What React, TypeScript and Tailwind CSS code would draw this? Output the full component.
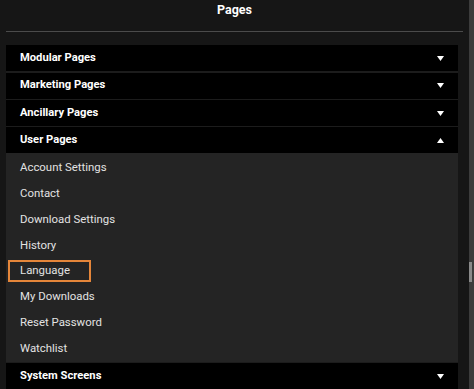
import React from 'react';

const sections = [
  { title: 'Modular Pages', open: false },
  { title: 'Marketing Pages', open: false },
  { title: 'Ancillary Pages', open: false },
  { title: 'User Pages', open: true },
  { title: 'System Screens', open: false },
];

const userPages = [
  'Account Settings',
  'Contact',
  'Download Settings',
  'History',
  'Language',
  'My Downloads',
  'Reset Password',
  'Watchlist',
];

function Caret({ up }: { up: boolean }) {
  return (
    <svg width="7" height="5" viewBox="0 0 7 5" className="shrink-0">
      {up ? <polygon points="0,5 7,5 3.5,0" fill="#fff" /> : <polygon points="0,0 7,0 3.5,5" fill="#fff" />}
    </svg>
  );
}

export default function App() {
  return (
    <div
      className="flex h-[389px] w-[474px] overflow-hidden bg-[#141414] text-white"
      style={{ fontFamily: 'Roboto, "Liberation Sans", sans-serif' }}
    >
      <div className="flex w-[469px] flex-col bg-[#161616]">
        {/* Header */}
        <div className="flex h-[24px] items-center justify-center text-[12.5px] font-bold">Pages</div>
        <div className="mx-[6px] mt-[10px] h-[2px] bg-[#4b4b4b]" />

        {/* Accordion */}
        <div className="mx-[6px] mt-[13px] flex w-[452px] flex-col gap-[1.4px] bg-[#1c1c1c]">
          {sections.map((s) => (
            <div key={s.title} className="flex flex-col">
              <div className="flex h-[26px] items-center justify-between bg-black pl-[14px] pr-[14px]">
                <span className="text-[11.2px] font-bold">{s.title}</span>
                <Caret up={s.open} />
              </div>
              {s.open && (
                <div className="flex flex-col bg-[#242424] pt-[1px]">
                  {userPages.map((p) => (
                    <div key={p} className="flex h-[25.9px] items-center pl-[2px]">
                      <span
                        className={
                          p === 'Language'
                            ? 'flex h-[22px] w-[83px] items-center border-2 border-[#e5863a] pl-[10px] text-[11.4px] text-[#e2e2e2]'
                            : 'pl-[12px] text-[11.4px] text-[#e2e2e2]'
                        }
                      >
                        {p}
                      </span>
                    </div>
                  ))}
                </div>
              )}
            </div>
          ))}
        </div>
      </div>

      {/* Scrollbar strip */}
      <div className="flex w-[5px] flex-col bg-[#3c3c3c]">
        <div className="mt-[262px] h-[20px] w-[3px] bg-[#8a8a8a]" />
      </div>
    </div>
  );
}
